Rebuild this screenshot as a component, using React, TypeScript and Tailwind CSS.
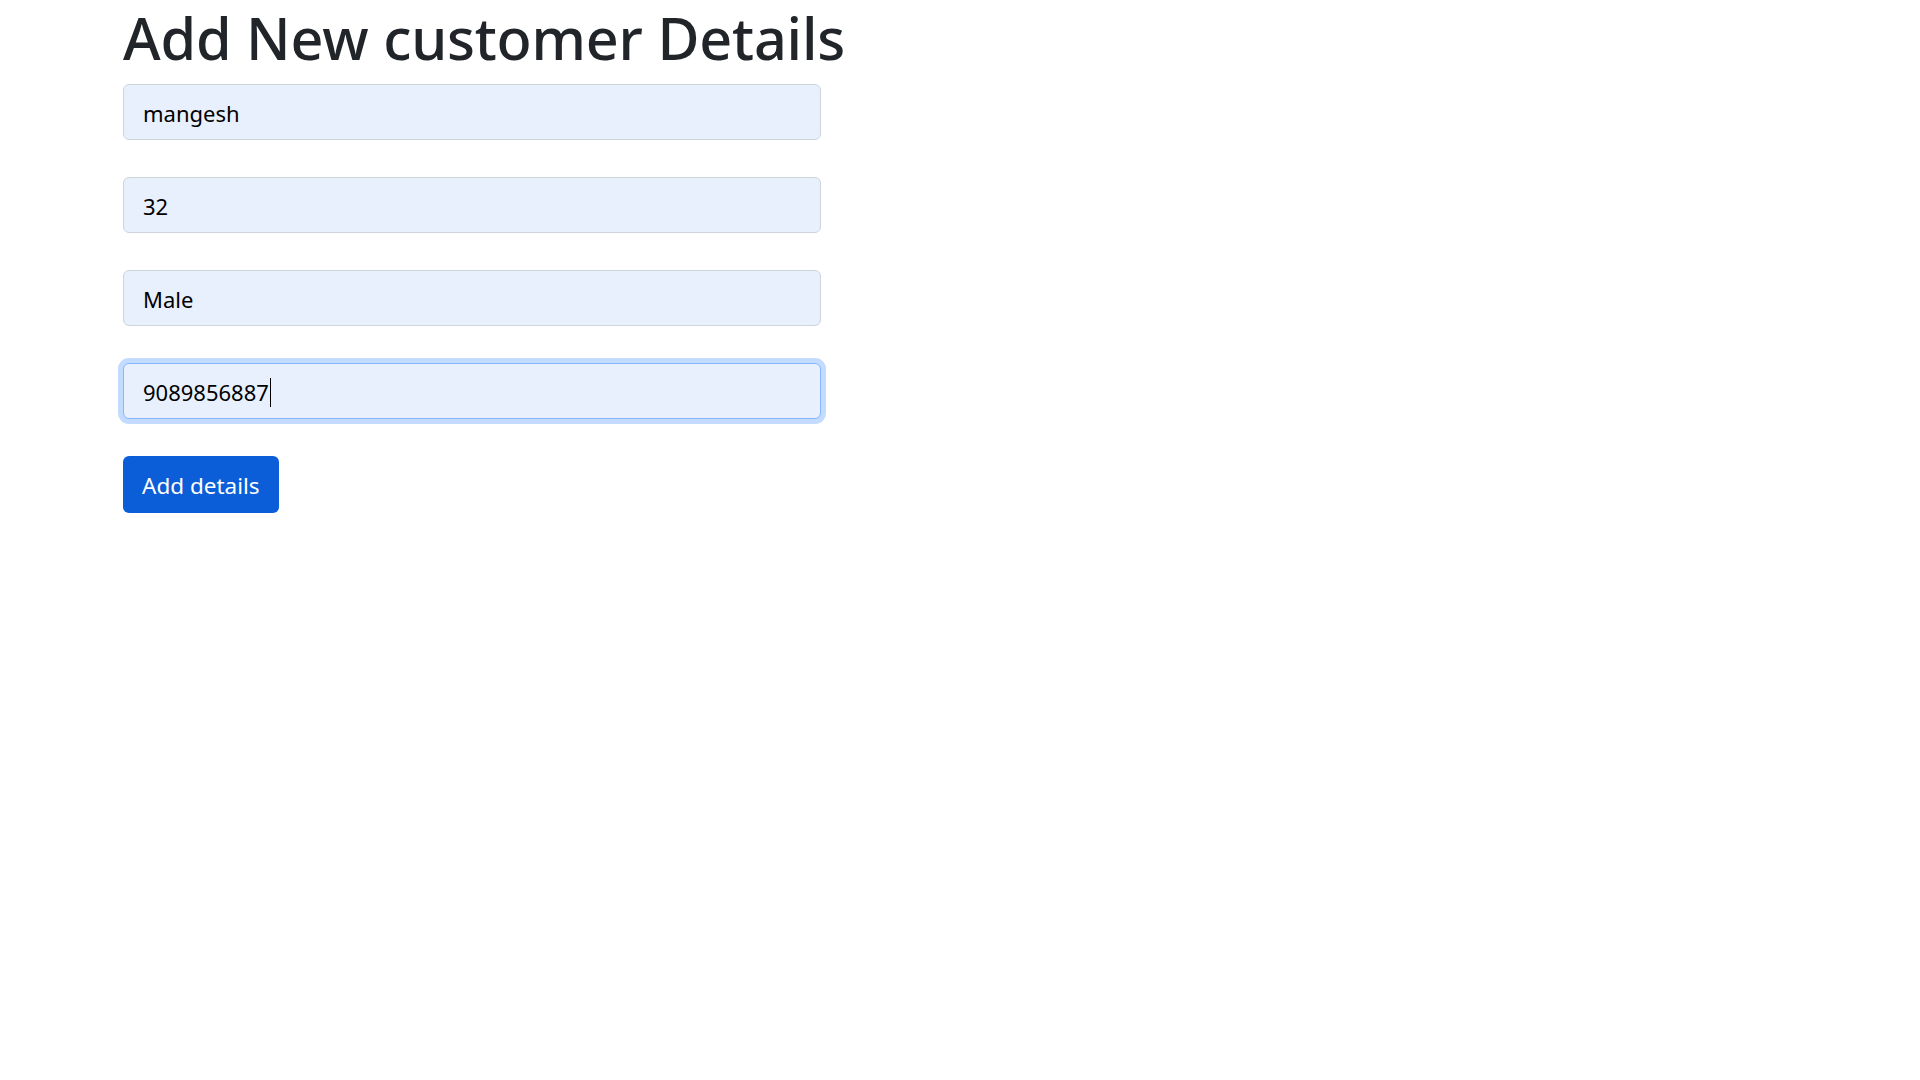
const fields = [
  { value: 'mangesh', focused: false },
  { value: '32', focused: false },
  { value: 'Male', focused: false },
  { value: '9089856887', focused: true },
]

export default function App() {
  return (
    <div className="min-h-screen bg-white pl-[123px] font-['Noto_Sans','Segoe_UI',sans-serif] text-[#212529]">
      <h1 className="m-0 h-[84px] pt-[3px] text-[57.5px] font-medium leading-[70px] tracking-[-0.2px]">
        Add New customer Details
      </h1>
      <div className="flex w-[698px] flex-col gap-[37px]">
        {fields.map((f) => (
          <div
            key={f.value}
            className={
              f.focused
                ? 'h-[56px] rounded-[6px] border border-[#86b7fe] bg-[#e8f0fe] px-[19px] shadow-[0_0_0_5px_#c2dbfe]'
                : 'h-[56px] rounded-[6px] border border-[#ced4da] bg-[#e8f0fe] px-[19px]'
            }
          >
            <div className="flex h-full items-center pt-[3px] text-[22px] text-black">
              <span>{f.value}</span>
              {f.focused ? <span className="ml-[1px] h-[29px] w-px bg-black" /> : null}
            </div>
          </div>
        ))}
        <div>
          <button className="h-[57px] rounded-[6px] bg-[#0b5ed7] px-[19px] pt-[3px] text-[22.5px] text-white">
            Add details
          </button>
        </div>
      </div>
    </div>
  )
}
